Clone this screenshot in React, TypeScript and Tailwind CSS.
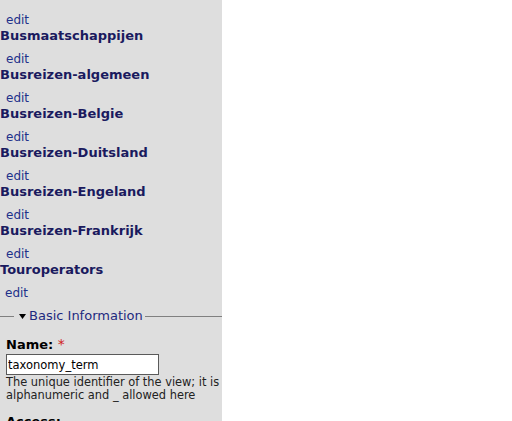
const terms = [
  'Busmaatschappijen',
  'Busreizen-algemeen',
  'Busreizen-Belgie',
  'Busreizen-Duitsland',
  'Busreizen-Engeland',
  'Busreizen-Frankrijk',
  'Touroperators',
];

const FONT = "font-['DejaVu_Sans',Verdana,sans-serif]";

export default function App() {
  return (
    <div className={`w-[512px] h-[421px] overflow-hidden bg-white ${FONT}`}>
      <div className="w-[222px] h-full bg-[#dedede] pt-[12px]">
        {/* Term list */}
        {terms.map((t) => (
          <div key={t} className="mb-[7px]">
            <div className="h-[16px] leading-[16px] pl-[6px] text-[12px] text-[#22308a]">edit</div>
            <div className="h-[16px] leading-[16px] text-[13px] font-bold text-[#1a1a5e] whitespace-nowrap">{t}</div>
          </div>
        ))}
        <div className="h-[16px] leading-[16px] pl-[5px] text-[12px] text-[#22308a]">edit</div>

        {/* Fieldset */}
        <div className="flex items-center mt-[7px] h-[16px]">
          <div className="w-[14px] h-px bg-[#808080]" />
          <div className="flex items-center pl-[5px] pr-[2px] text-[13px] leading-[16px] text-[#1f2a80] whitespace-nowrap">
            <svg width="7" height="5" viewBox="0 0 7 5" className="mr-[3px]">
              <path d="M0 0H7L3.5 5Z" fill="#000" />
            </svg>
            Basic Information
          </div>
          <div className="flex-1 h-px bg-[#808080]" />
        </div>

        <div className="pl-[6px] pt-[13px]">
          <div className="h-[16px] text-[13px] leading-[16px] font-bold text-black">
            Name: <span className="text-[#d0201a] font-normal text-[14px] leading-none">*</span>
          </div>
          <input
            readOnly
            value="taxonomy_term"
            className="block mt-px w-[153px] h-[21px] border border-[#5a5a5a] bg-white px-[1px] text-[11.5px] text-black outline-none"
          />
          <div className="mt-[1px] text-[11.4px] leading-[13px] text-[#222] whitespace-nowrap">
            The unique identifier of the view; it is
            <br />
            alphanumeric and _ allowed here
          </div>
          <div className="mt-[12px] text-[13px] leading-[16px] font-bold text-black">Access:</div>
        </div>
      </div>
    </div>
  );
}
